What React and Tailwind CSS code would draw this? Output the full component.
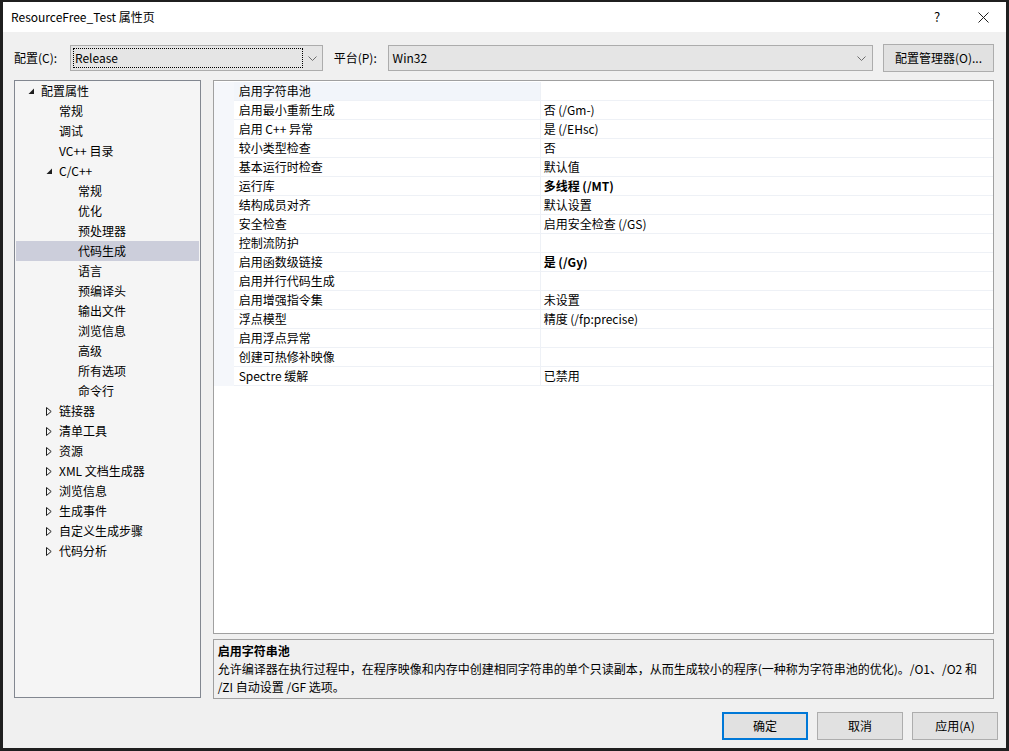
import React from "react";

const FONT = { fontFamily: '"Microsoft YaHei UI", "Noto Sans CJK SC", "Noto Sans", sans-serif' };

function Expanded() {
  return (
    <svg width="7" height="7" viewBox="0 0 7 7" className="shrink-0">
      <polygon points="6,0.5 6,6 0.5,6" fill="#1e1e1e" />
    </svg>
  );
}

function Collapsed() {
  return (
    <svg width="6" height="9" viewBox="0 0 6 9" className="shrink-0">
      <polygon points="0.5,0.5 5.2,4.5 0.5,8.5" fill="none" stroke="#1e1e1e" strokeWidth="1" />
    </svg>
  );
}

function Chevron() {
  return (
    <svg width="9" height="5" viewBox="0 0 9 5">
      <polyline points="0.5,0.5 4.5,4.5 8.5,0.5" fill="none" stroke="#6d6d6d" strokeWidth="1" />
    </svg>
  );
}

const tree = [
  { l: 0, t: "配置属性", e: "open" },
  { l: 1, t: "常规" },
  { l: 1, t: "调试" },
  { l: 1, t: "VC++ 目录" },
  { l: 1, t: "C/C++", e: "open" },
  { l: 2, t: "常规" },
  { l: 2, t: "优化" },
  { l: 2, t: "预处理器" },
  { l: 2, t: "代码生成", sel: true },
  { l: 2, t: "语言" },
  { l: 2, t: "预编译头" },
  { l: 2, t: "输出文件" },
  { l: 2, t: "浏览信息" },
  { l: 2, t: "高级" },
  { l: 2, t: "所有选项" },
  { l: 2, t: "命令行" },
  { l: 1, t: "链接器", e: "closed" },
  { l: 1, t: "清单工具", e: "closed" },
  { l: 1, t: "资源", e: "closed" },
  { l: 1, t: "XML 文档生成器", e: "closed" },
  { l: 1, t: "浏览信息", e: "closed" },
  { l: 1, t: "生成事件", e: "closed" },
  { l: 1, t: "自定义生成步骤", e: "closed" },
  { l: 1, t: "代码分析", e: "closed" },
];

const props = [
  ["启用字符串池", "", false, true],
  ["启用最小重新生成", "否 (/Gm-)"],
  ["启用 C++ 异常", "是 (/EHsc)"],
  ["较小类型检查", "否"],
  ["基本运行时检查", "默认值"],
  ["运行库", "多线程 (/MT)", true],
  ["结构成员对齐", "默认设置"],
  ["安全检查", "启用安全检查 (/GS)"],
  ["控制流防护", ""],
  ["启用函数级链接", "是 (/Gy)", true],
  ["启用并行代码生成", ""],
  ["启用增强指令集", "未设置"],
  ["浮点模型", "精度 (/fp:precise)"],
  ["启用浮点异常", ""],
  ["创建可热修补映像", ""],
  ["Spectre 缓解", "已禁用"],
];

function TreeRow({ item }) {
  const indent = item.l === 0 ? "pl-[12px]" : item.l === 1 ? "pl-[30px]" : "pl-[62px]";
  return (
    <div className={`h-[20px] flex items-center ${indent} ${item.sel ? "bg-[#cccedb]" : ""}`}>
      {item.l < 2 && (
        <div className="w-[13px] flex items-center">
          {item.e === "open" && <Expanded />}
          {item.e === "closed" && <Collapsed />}
        </div>
      )}
      <span className="whitespace-nowrap">{item.t}</span>
    </div>
  );
}

function Button({ children, primary, className = "" }) {
  return (
    <div
      className={`w-[86px] h-[28px] flex items-center justify-center bg-[#e1e1e1] ${
        primary ? "border-2 border-[#0078d7]" : "border border-[#adadad]"
      } ${className}`}
    >
      {children}
    </div>
  );
}

export default function App() {
  return (
    <div className="w-[1009px] h-[751px] bg-[#1f1f1f] pl-[3px] pt-[2px] text-[12px] text-black" style={FONT}>
      <div className="w-[1003px] h-[746px] flex flex-col bg-[#f0f0f0]">
        {/* title bar */}
        <div className="h-[30px] bg-white flex items-center pl-[8px] shrink-0">
          <span className="flex-1 whitespace-nowrap">ResourceFree_Test 属性页</span>
          <div className="w-[46px] h-[30px] flex items-center justify-center text-[13px]">?</div>
          <div className="w-[46px] h-[30px] flex items-center justify-center">
            <svg width="11" height="11" viewBox="0 0 11 11">
              <path d="M0.5 0.5 L10.5 10.5 M10.5 0.5 L0.5 10.5" stroke="#1e1e1e" strokeWidth="1" />
            </svg>
          </div>
        </div>

        {/* body */}
        <div className="flex-1 flex flex-col pl-[11px] pr-[12px] pt-[12px]">
          {/* config row */}
          <div className="h-[28px] flex items-center">
            <span className="w-[56px] whitespace-nowrap">配置(C):</span>
            <div className="w-[253px] h-[26px] bg-[#e5e5e5] border border-[#acacac] flex items-center p-[2px]">
              <div className="flex-1 h-full border border-dotted border-black flex items-center pl-[1px]">Release</div>
              <div className="w-[17px] flex justify-center pl-[2px]">
                <Chevron />
              </div>
            </div>
            <span className="ml-[11px] w-[54px] whitespace-nowrap">平台(P):</span>
            <div className="w-[486px] h-[26px] bg-[#e5e5e5] border border-[#acacac] flex items-center pl-[3px]">
              <span className="flex-1 pl-[1px]">Win32</span>
              <div className="w-[20px] flex justify-center pr-[2px]">
                <Chevron />
              </div>
            </div>
            <div className="ml-[10px] w-[111px] h-[28px] bg-[#e1e1e1] border border-[#adadad] flex items-center justify-center whitespace-nowrap">
              配置管理器(O)...
            </div>
          </div>

          {/* main */}
          <div className="flex mt-[8px] gap-[12px]">
            <div className="w-[187px] h-[618px] border border-[#828790] bg-[#f5f5f5] px-[1px]">
              {tree.map((item, i) => (
                <TreeRow key={i} item={item} />
              ))}
            </div>

            <div className="w-[783px] flex flex-col gap-[5px]">
              <div className="h-[554px] border border-[#a0a0a0] bg-white flex flex-col overflow-hidden pt-[1px]">
                {props.map(([name, value, bold, sel], i) => (
                  <div key={i} className="h-[19px] flex shrink-0">
                    <div className="w-[20px] bg-[#f5f7fb]" />
                    <div
                      className={`w-[307px] flex items-center pl-[5px] border-b border-r border-[#eef1f6] whitespace-nowrap ${
                        sel ? "bg-[#f2f5fa]" : ""
                      }`}
                    >
                      {name}
                    </div>
                    <div
                      className={`flex-1 flex items-center pl-[3px] border-b border-[#eef1f6] whitespace-nowrap ${
                        bold ? "font-bold" : ""
                      }`}
                    >
                      {value}
                    </div>
                  </div>
                ))}
              </div>
              <div className="h-[60px] border border-[#a0a0a0] px-[4px] pt-[2px] leading-[18px]">
                <div className="font-bold">启用字符串池</div>
                <div className="whitespace-nowrap">
                  允许编译器在执行过程中，在程序映像和内存中创建相同字符串的单个只读副本，从而生成较小的程序(一种称为字符串池的优化)。/O1、/O2 和
                </div>
                <div className="whitespace-nowrap">/ZI 自动设置 /GF 选项。</div>
              </div>
            </div>
          </div>

          {/* buttons */}
          <div className="flex justify-end mt-[13px] gap-[9px] mr-[-4px]">
            <Button primary>确定</Button>
            <Button>取消</Button>
            <Button>应用(A)</Button>
          </div>
        </div>
      </div>
    </div>
  );
}
